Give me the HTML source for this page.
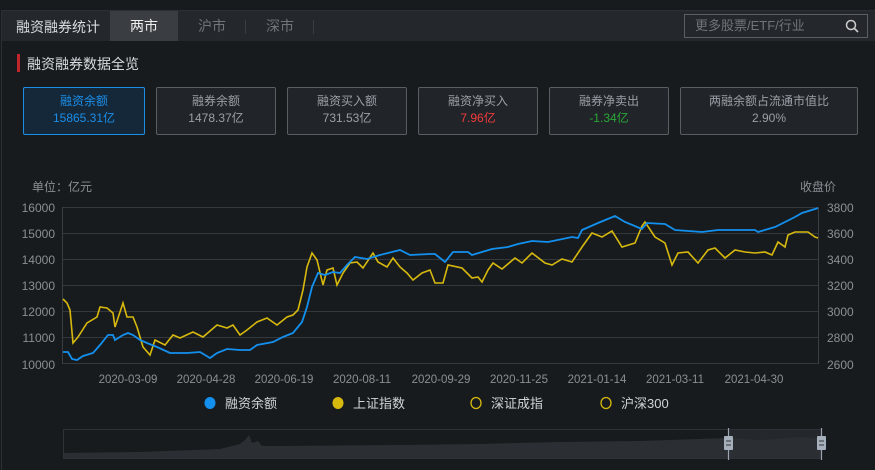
<!DOCTYPE html>
<html><head><meta charset="utf-8"><style>
*{margin:0;padding:0;box-sizing:border-box}
body{width:875px;height:466px;background:#181b1e;font-family:"Liberation Sans","Noto Sans CJK SC",sans-serif;position:relative;overflow:hidden;color:#ccc}
.panel{position:absolute;left:1px;top:10px;width:880px;height:460px;border:1px solid #2c2f33;border-right:none;border-bottom:none}
.hdr{position:absolute;left:2px;top:11px;width:873px;height:30px;background:#24272b}
.t{position:absolute;font-size:14px;top:17px;color:#d8dde2}
.tab{position:absolute;top:11px;height:30px;line-height:30px;text-align:center;font-size:14px;color:#70757a}
.sep{position:absolute;top:20px;width:1px;height:14px;background:#3a3d41}
.search{position:absolute;left:684px;top:14px;width:184px;height:24px;border:1px solid #5b5f64;font-size:13px;color:#70757a;line-height:22px;padding-left:10px}
.card{position:absolute;top:87px;height:48px;border:1px solid #5a5e63;border-radius:2px;background:#212428;text-align:center;font-size:12px;color:#9aa0a6;line-height:17px;padding-top:5px}
.card b{font-weight:normal;display:block}
</style></head><body>
<div class="panel"></div>
<div class="hdr"></div>
<div class="t" style="left:16px">融资融券统计</div>
<div class="tab" style="left:110px;width:68px;background:#3a3d41;color:#eee">两市</div>
<div class="tab" style="left:178px;width:68px">沪市</div>
<div class="sep" style="left:245px"></div>
<div class="tab" style="left:246px;width:68px">深市</div>
<div class="sep" style="left:313px"></div>
<div class="search">更多股票/ETF/行业
<svg style="position:absolute;right:8px;top:4px" width="14" height="14" viewBox="0 0 14 14"><circle cx="6" cy="6" r="4.5" fill="none" stroke="#ccc" stroke-width="1.5"/><path d="M9.5 9.5L13 13" stroke="#ccc" stroke-width="1.6"/></svg></div>
<div style="position:absolute;left:17px;top:54px;width:3px;height:18px;background:#c0262c"></div>
<div style="position:absolute;left:27px;top:54px;font-size:14px;color:#d8dde2">融资融券数据全览</div>

<div class="card" style="left:23px;width:122px;border-color:#1b8ee8;background:#15283a;color:#1b8ee8">融资余额<b>15865.31亿</b></div>
<div class="card" style="left:156px;width:120px">融券余额<b>1478.37亿</b></div>
<div class="card" style="left:287px;width:120px">融资买入额<b>731.53亿</b></div>
<div class="card" style="left:418px;width:120px">融资净买入<b style="color:#f23c3c">7.96亿</b></div>
<div class="card" style="left:549px;width:120px">融券净卖出<b style="color:#2aa838">-1.34亿</b></div>
<div class="card" style="left:680px;width:178px">两融余额占流通市值比<b>2.90%</b></div>

<svg style="position:absolute;left:0;top:0" width="875" height="466">
<g font-family="Liberation Sans,Noto Sans CJK SC,sans-serif" font-size="12" fill="#8a8f94">
<text x="32" y="191">单位：亿元</text>
<text x="800" y="191">收盘价</text>
<g text-anchor="end">
<text x="55" y="212">16000</text><text x="55" y="238">15000</text><text x="55" y="264">14000</text><text x="55" y="290">13000</text><text x="55" y="316">12000</text><text x="55" y="342">11000</text><text x="55" y="369">10000</text></g>
<text x="827" y="212">3800</text><text x="827" y="238">3600</text><text x="827" y="264">3400</text><text x="827" y="290">3200</text><text x="827" y="316">3000</text><text x="827" y="342">2800</text><text x="827" y="369">2600</text>
<g text-anchor="middle" font-size="11.5"><text x="128" y="383">2020-03-09</text><text x="206" y="383">2020-04-28</text><text x="284" y="383">2020-06-19</text><text x="362" y="383">2020-08-11</text><text x="441" y="383">2020-09-29</text><text x="519" y="383">2020-11-25</text><text x="597" y="383">2021-01-14</text><text x="675" y="383">2021-03-11</text><text x="754" y="383">2021-04-30</text></g>
</g>
<g stroke="#34373b" stroke-width="1"><path d="M62 207.5H819M62 233.5H819M62 259.5H819M62 285.5H819M62 311.5H819M62 337.5H819M62 363.5H819"/><path d="M62.5 207V364M818.5 207V364" stroke="#3a3d41"/></g>
<polyline fill="none" stroke="#d7b90e" stroke-width="1.6" points="63,299 67,303 70,310 73,343 78,337 87,323 97,317 100,307 107,308 113,313 115,327 123,303 127,317 133,317 137,327 143,347 150,355 155,340 165,345 173,335 180,338 193,332 203,337 217,325 227,328 233,325 240,335 247,330 257,322 267,318 277,325 287,317 293,315 298,310 303,290 307,267 312,253 317,260 323,285 327,270 333,268 337,285 343,273 350,263 357,262 363,268 373,253 378,262 387,267 393,258 400,267 407,273 413,280 422,273 430,270 435,283 443,283 448,265 462,268 472,278 478,277 482,282 488,270 493,263 502,269 515,258 522,263 532,253 545,263 552,265 562,259 572,262 582,247 592,233 602,237 612,231 622,247 635,243 642,226 645,222 655,237 665,243 672,265 678,253 688,252 698,263 708,250 715,248 725,258 735,250 745,252 755,253 765,252 772,255 778,242 785,247 788,235 795,232 808,232 815,237 818,238"/>
<polyline fill="none" stroke="#1390ee" stroke-width="1.8" points="63,352 68,352 72,359 77,360 83,356 93,353 100,345 108,335 113,335 115,340 123,335 128,333 133,335 140,340 147,343 157,347 170,353 187,353 200,352 210,358 217,353 227,349 240,350 250,350 257,345 273,342 283,337 293,333 302,322 307,307 312,287 318,273 325,275 333,272 340,273 347,265 355,257 367,259 380,255 400,250 410,255 430,254 435,254 445,262 453,252 468,252 472,255 492,249 508,247 518,244 532,241 548,242 572,237 578,238 582,230 598,223 615,216 625,222 642,229 647,223 665,224 675,230 702,232 718,230 755,230 758,232 775,227 795,217 802,213 815,209 818,208"/>
<g font-family="Liberation Sans,Noto Sans CJK SC,sans-serif" font-size="13" fill="#d0d4d8">
<ellipse cx="210" cy="403" rx="5.5" ry="6" fill="#1390ee"/><text x="225" y="408">融资余额</text>
<ellipse cx="338" cy="403" rx="5.5" ry="6" fill="#d7b90e"/><text x="353" y="408">上证指数</text>
<ellipse cx="476" cy="403" rx="5" ry="5.5" fill="none" stroke="#d7b90e" stroke-width="1.3"/><text x="491" y="408">深证成指</text>
<ellipse cx="606" cy="403" rx="5" ry="5.5" fill="none" stroke="#d7b90e" stroke-width="1.3"/><text x="621" y="408">沪深300</text>
</g>
<rect x="63.5" y="429.5" width="758" height="29" fill="none" stroke="#2e3135"/>
<rect x="728" y="430" width="93" height="28" fill="#24272b"/>
<path d="M64 453L140 452L220 449L240 444L245 440L249 435L252 443L258 441L262 446L280 446L400 445L480 444L560 442L640 441L728 438L760 440L800 437L821 438V458H64Z" fill="#2b2e32"/>
<g stroke="#9aa3b0" stroke-width="1.2"><path d="M728.5 428V460M821.5 428V460"/></g>
<rect x="724" y="436" width="9" height="14" rx="1" fill="#a6b0bd"/><path d="M726 441H731M726 445H731" stroke="#333" stroke-width="1"/>
<rect x="817" y="436" width="9" height="14" rx="1" fill="#a6b0bd"/><path d="M819 441H824M819 445H824" stroke="#333" stroke-width="1"/>
</svg>
</body></html>
